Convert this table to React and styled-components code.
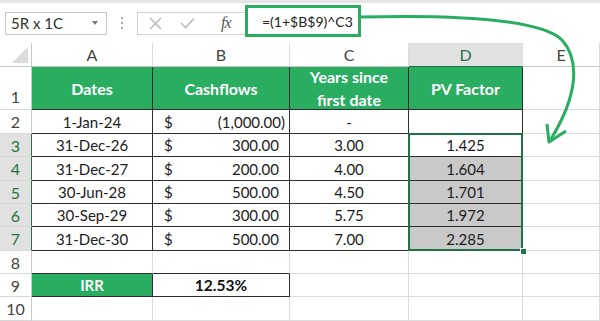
import React from 'react';
import styled, { createGlobalStyle } from 'styled-components';

const GREEN = '#28ad61';
const XL_GREEN = '#217346';
const EDGE = '#2e2e2e';
const GRID = '#dcdcdc';

const Global = createGlobalStyle`
  html, body { margin: 0; padding: 0; background: #fff; }
  body { font-family: Lato, "Open Sans", sans-serif; overflow: hidden; }
`;

const Page = styled.div`
  position: relative;
  width: 600px;
  height: 321px;
  overflow: hidden;
  background: #fff;
`;

const TopStrip = styled.div`
  height: 3px;
  background: #e6e6e6;
`;

const FormulaBar = styled.div`
  height: 40px;
  display: flex;
  align-items: center;
  padding-left: 5px;
  box-sizing: border-box;
`;

const NameBox = styled.div`
  width: 102px;
  height: 23px;
  box-sizing: border-box;
  border: 1px solid #c6c6c6;
  display: flex;
  align-items: center;
  justify-content: space-between;
  padding: 0 8px 0 5px;
  font-size: 15px;
  color: #333;
`;

const DropArrow = styled.span`
  width: 0;
  height: 0;
  border-left: 3.5px solid transparent;
  border-right: 3.5px solid transparent;
  border-top: 4px solid #777;
`;

const Dots = styled.div`
  width: 30px;
  display: flex;
  flex-direction: column;
  align-items: center;
  gap: 3px;
  span {
    width: 2px;
    height: 2px;
    background: #a8a8a8;
  }
`;

const ButtonsBox = styled.div`
  width: 108px;
  height: 23px;
  box-sizing: border-box;
  border: 1px solid #d2d2d2;
  border-right: none;
  display: flex;
  align-items: center;
  padding-left: 11px;
  gap: 18px;
`;

const Fx = styled.span`
  font-family: "Liberation Serif", serif;
  font-style: italic;
  font-size: 16px;
  color: #555;
  margin-left: 8px;
  letter-spacing: -1px;
`;

const FormulaInput = styled.div`
  width: 116px;
  height: 32px;
  margin-top: -4px;
  box-sizing: border-box;
  border: 3px solid ${GREEN};
  display: flex;
  align-items: center;
  padding-left: 14px;
  font-size: 14px;
  color: #222;
  white-space: nowrap;
`;

const Sheet = styled.div`
  display: grid;
  grid-template-columns: 32px 121px 137px 119px 114px 1fr;
  grid-template-rows: 24px 43px 24px 23px 24px 23px 23px 24px 23px 23px 24px;
  color: #1b1b1b;
`;

const Corner = styled.div`
  position: relative;
  border-right: 1px solid #c8c8c8;
  border-bottom: 1px solid #c8c8c8;
  &::after {
    content: '';
    position: absolute;
    right: 3px;
    bottom: 3px;
    border-left: 16px solid transparent;
    border-bottom: 16px solid #dcdcdc;
  }
`;

const ColHead = styled.div`
  display: flex;
  align-items: center;
  justify-content: center;
  font-size: 16px;
  color: ${p => (p.$on ? XL_GREEN : '#444')};
  background: ${p => (p.$on ? '#e1e1e1' : '#fff')};
  border-right: 1px solid ${GRID};
  border-bottom: 1px solid ${p => (p.$on ? XL_GREEN : '#c8c8c8')};
`;

const RowHead = styled.div`
  display: flex;
  align-items: ${p => (p.$tall ? 'flex-end' : 'center')};
  justify-content: center;
  padding-bottom: ${p => (p.$tall ? '3px' : '0')};
  font-size: 16px;
  color: ${p => (p.$on ? XL_GREEN : '#444')};
  background: ${p => (p.$on ? '#e1e1e1' : '#fff')};
  border-right: ${p => (p.$on ? `1px solid ${XL_GREEN}` : '1px solid #c8c8c8')};
  border-bottom: 1px solid #d6d6d6;
  box-sizing: border-box;
`;

const Cell = styled.div`
  display: flex;
  align-items: center;
  justify-content: ${p => p.$justify || 'center'};
  padding: ${p => p.$pad || '0'};
  text-align: center;
  background: ${p => p.$bg || '#fff'};
  color: ${p => p.$fg || '#1b1b1b'};
  font-weight: ${p => (p.$bold ? 700 : 400)};
  font-size: ${p => p.$size || '15px'};
  line-height: ${p => p.$lh || 'normal'};
  border-right: 1px solid ${p => (p.$r ? EDGE : GRID)};
  border-bottom: 1px solid ${p => (p.$b ? EDGE : GRID)};
  box-sizing: border-box;
  white-space: pre-line;
`;

const Amount = styled.span`
  margin-right: ${p => (p.$neg ? '-6px' : '0')};
`;

/* selected range D3:D7 — a sub-grid sharing the sheet's row tracks */
const Selection = styled.div`
  grid-column: 5 / 6;
  grid-row: 4 / 9;
  display: grid;
  grid-template-rows: subgrid;
  position: relative;
  &::before {
    content: '';
    position: absolute;
    inset: -1px 0 0 -1px;
    border: 2px solid ${XL_GREEN};
    pointer-events: none;
  }
  &::after {
    content: '';
    position: absolute;
    right: -4px;
    bottom: -4px;
    width: 5px;
    height: 5px;
    background: ${XL_GREEN};
    border: 1px solid #fff;
  }
`;

const Annotation = styled.svg`
  position: absolute;
  left: 0;
  top: 0;
  pointer-events: none;
`;

const rows = [
  { n: 2, a: '1-Jan-24', b: '(1,000.00)', neg: true, c: '-', d: '' },
  { n: 3, a: '31-Dec-26', b: '300.00', c: '3.00', d: '1.425' },
  { n: 4, a: '31-Dec-27', b: '200.00', c: '4.00', d: '1.604' },
  { n: 5, a: '30-Jun-28', b: '500.00', c: '4.50', d: '1.701' },
  { n: 6, a: '30-Sep-29', b: '300.00', c: '5.75', d: '1.972' },
  { n: 7, a: '31-Dec-30', b: '500.00', c: '7.00', d: '2.285' },
];

const headers = ['Dates', 'Cashflows', 'Years since\nfirst date', 'PV Factor'];

const App = () => (
  <Page>
    <Global />
    <TopStrip />
    <FormulaBar>
      <NameBox>
        5R x 1C
        <DropArrow />
      </NameBox>
      <Dots><span /><span /><span /></Dots>
      <ButtonsBox>
        <svg width="13" height="13" viewBox="0 0 13 13">
          <path d="M1 1 L12 12 M12 1 L1 12" stroke="#b4b4b4" strokeWidth="1.3" fill="none" />
        </svg>
        <svg width="15" height="12" viewBox="0 0 15 12">
          <path d="M1 6 L5.5 10.5 L14 1.5" stroke="#bdbdbd" strokeWidth="1.6" fill="none" />
        </svg>
        <Fx>fx</Fx>
      </ButtonsBox>
      <FormulaInput>=(1+$B$9)^C3</FormulaInput>
    </FormulaBar>

    <Sheet>
      <Corner />
      {['A', 'B', 'C', 'D', 'E'].map(l => (
        <ColHead key={l} $on={l === 'D'}>{l}</ColHead>
      ))}

      <RowHead $tall>1</RowHead>
      {headers.map(h => (
        <Cell key={h} $bg={GREEN} $fg="#fff" $bold $size="16px" $lh="23px" $r $b>{h}</Cell>
      ))}
      <Cell />

      {rows.map(r => (
        <React.Fragment key={r.n}>
          <RowHead $on={r.n >= 3}>{r.n}</RowHead>
          <Cell $r $b>{r.a}</Cell>
          <Cell $r $b $justify="space-between" $pad="0 10px 0 11px">
            <span>$</span>
            <Amount $neg={r.neg}>{r.b}</Amount>
          </Cell>
          <Cell $r $b>{r.c}</Cell>
          {r.n === 2 && <Cell $r $b />}
          <Cell />
        </React.Fragment>
      ))}

      <Selection>
        {rows.slice(1).map(r => (
          <Cell key={r.n} $r $b $bg={r.n >= 4 ? '#c9c9c9' : '#fff'}>{r.d}</Cell>
        ))}
      </Selection>

      <RowHead>8</RowHead>
      <Cell $b />
      <Cell $b />
      <Cell />
      <Cell />
      <Cell />

      <RowHead>9</RowHead>
      <Cell $bg={GREEN} $fg="#fff" $bold $size="15px" $r $b>IRR</Cell>
      <Cell $bold $size="15.5px" $fg="#111" $r $b>12.53%</Cell>
      <Cell />
      <Cell />
      <Cell />

      <RowHead>10</RowHead>
      <Cell />
      <Cell />
      <Cell />
      <Cell />
      <Cell />
    </Sheet>

    <Annotation width="600" height="321" viewBox="0 0 600 321">
      <path
        d="M361 17 C 450 15, 540 18, 562 40 C 580 60, 578 95, 551 139"
        stroke={GREEN}
        strokeWidth="3"
        fill="none"
      />
      <path d="M547 124 L549 142 L566 131" stroke={GREEN} strokeWidth="3" fill="none" strokeLinejoin="round" />
    </Annotation>
  </Page>
);

export default App;
